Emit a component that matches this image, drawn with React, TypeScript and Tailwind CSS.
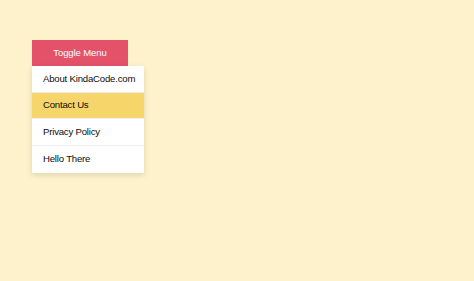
import { useState } from 'react';

const items = ['About KindaCode.com', 'Contact Us', 'Privacy Policy', 'Hello There'];

export default function App() {
  const [open, setOpen] = useState(true);
  const [active] = useState(1);

  return (
    <div className="min-h-screen w-full bg-[#fdf2cb] pl-8 pt-10 font-['Liberation_Sans',Arial,sans-serif]">
      <button
        className="flex h-[26px] w-24 items-center justify-center whitespace-nowrap bg-[#e4526a] text-[9.5px] tracking-[-0.1px] text-white"
        onClick={() => setOpen(!open)}
      >
        Toggle Menu
      </button>
      {open && (
        <ul className="w-28 bg-white shadow-[0_2px_6px_rgba(0,0,0,0.12)]">
          {items.map((item, i) => (
            <li
              key={item}
              className={
                'flex h-[26.7px] items-center whitespace-nowrap border-b border-[#eeeeee] px-[11px] text-[9.6px] tracking-[-0.2px] text-[#0d0d0d] last:border-b-0 ' +
                (i === active ? 'bg-[#f6d66a]' : 'bg-white')
              }
            >
              {item}
            </li>
          ))}
        </ul>
      )}
    </div>
  );
}
